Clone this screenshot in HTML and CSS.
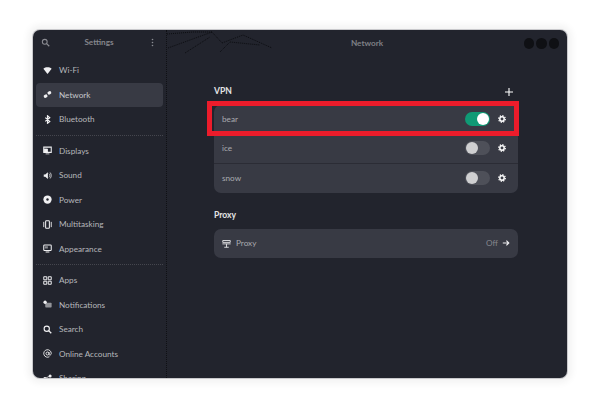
FILE: index.html
```html
<!DOCTYPE html>
<html lang="en">
<head>
<meta charset="utf-8">
<title>Settings - Network</title>
<link rel="stylesheet" href="styles.css">
</head>
<body>
<div class="window">
  <aside class="sidebar">
    <header class="side-head">
      <svg class="ic dim" viewBox="0 0 12 12"><circle cx="5" cy="5" r="3.2" fill="none" stroke="currentColor" stroke-width="1.4"/><path d="M7.5 7.5L11 11" stroke="currentColor" stroke-width="1.6"/></svg>
      <span class="side-title">Settings</span>
      <svg class="ic dim" viewBox="0 0 12 12"><circle cx="6" cy="2" r="1.1" fill="currentColor"/><circle cx="6" cy="6" r="1.1" fill="currentColor"/><circle cx="6" cy="10" r="1.1" fill="currentColor"/></svg>
    </header>
    <nav class="nav">
      <div class="group">
        <div class="item"><svg class="ic" viewBox="0 0 12 12"><path d="M0.5 3.5C3.5 1 8.500 1 11.500 3.500L6 10.500Z" fill="currentColor"/></svg><span>Wi-Fi</span></div>
        <div class="item active"><svg class="ic" viewBox="0 0 12 12"><rect x="6" y="1.800" width="5" height="4" rx="1.700" fill="currentColor" transform="rotate(-25 8.500 3.800)"/><rect x="1" y="6.200" width="5" height="4" rx="1.700" fill="currentColor" transform="rotate(-25 3.500 8.200)"/></svg><span>Network</span></div>
        <div class="item"><svg class="ic" viewBox="0 0 12 12"><path d="M3 3.500L9 8.500L6 11V1L9 3.500L3 8.500" fill="none" stroke="currentColor" stroke-width="1.600"/></svg><span>Bluetooth</span></div>
      </div>
      <div class="group">
        <div class="item"><svg class="ic" viewBox="0 0 12 12"><path d="M1 1.500H11V8.500H1Z" fill="none" stroke="currentColor" stroke-width="1.400"/><path d="M1.500 4H6V8H1.500ZM3.500 10.500H8.500" fill="currentColor" stroke="currentColor"/></svg><span>Displays</span></div>
        <div class="item"><svg class="ic" viewBox="0 0 12 12"><path d="M1 4.500H3L6.500 1.500V10.500L3 7.500H1Z" fill="currentColor"/><path d="M8 3.500C9.500 5 9.500 7 8 8.500M9.500 2C11.500 4.500 11.500 7.500 9.500 10" fill="none" stroke="currentColor"/></svg><span>Sound</span></div>
        <div class="item"><svg class="ic" viewBox="0 0 12 12"><circle cx="6" cy="6" r="5.500" fill="currentColor"/><circle cx="6" cy="6" r="1.600" fill="#22242d"/></svg><span>Power</span></div>
        <div class="item"><svg class="ic" viewBox="0 0 12 12"><rect x="3.500" y="1" width="5" height="10" rx="1" fill="none" stroke="currentColor" stroke-width="1.400"/><path d="M1 2.500V9.500M11 2.500V9.500" stroke="currentColor" stroke-width="1.200"/></svg><span>Multitasking</span></div>
        <div class="item"><svg class="ic" viewBox="0 0 12 12"><rect x="1" y="1.200" width="10" height="7.500" rx="1" fill="none" stroke="currentColor" stroke-width="1.400"/><rect x="2.500" y="3" width="4" height="3" fill="currentColor" opacity=".5"/><path d="M3.500 10.700H8.500" stroke="currentColor" stroke-width="1.400"/></svg><span>Appearance</span></div>
      </div>
      <div class="group last">
        <div class="item"><svg class="ic" viewBox="0 0 12 12"><path d="M1 1H5V5H1ZM7 1H11V5H7ZM1 7H5V11H1ZM7 7H11V11H7Z" fill="none" stroke="currentColor" stroke-width="1.300"/></svg><span>Apps</span></div>
        <div class="item"><svg class="ic" viewBox="0 0 12 12"><rect x="3" y="3.500" width="8.500" height="6.500" rx="1" fill="currentColor" opacity=".55"/><circle cx="2.800" cy="3" r="2.200" fill="currentColor"/></svg><span>Notifications</span></div>
        <div class="item"><svg class="ic" viewBox="0 0 12 12"><circle cx="5" cy="5" r="3.500" fill="none" stroke="currentColor" stroke-width="1.500"/><path d="M7.500 7.500L11 11" stroke="currentColor" stroke-width="1.800"/></svg><span>Search</span></div>
        <div class="item"><svg class="ic" viewBox="0 0 12 12"><circle cx="6" cy="6" r="2" fill="none" stroke="currentColor" stroke-width="1.200"/><path d="M8 4V7C8 8.500 11 8.500 11 6A5 5 0 1 0 8.500 10.300" fill="none" stroke="currentColor" stroke-width="1.200"/></svg><span>Online Accounts</span></div>
        <div class="item"><svg class="ic" viewBox="0 0 12 12"><circle cx="2.500" cy="6" r="2" fill="currentColor"/><circle cx="9.500" cy="2.500" r="2" fill="currentColor"/><circle cx="9.500" cy="9.500" r="2" fill="currentColor"/><path d="M2.500 6L9.500 2.500M2.500 6L9.500 9.500" stroke="currentColor"/></svg><span>Sharing</span></div>
      </div>
    </nav>
  </aside>
  <main class="content">
    <svg class="sketch" viewBox="0 0 110 30"><path d="M0 4L26 2L45 2L55 13L76 5L105 18M1 18L45 2M18 23L43 7M53 22L63 12L93 15" fill="none" stroke="#0a0b0f" stroke-width=".9" stroke-dasharray="1 1"/></svg>
    <header class="head">
      <span class="head-title">Network</span>
      <div class="controls"><i class="dot"></i><i class="dot"></i><i class="dot"></i></div>
    </header>
    <div class="page">
      <section class="sec">
        <div class="sec-head"><span class="sec-title">VPN</span><svg class="plus" viewBox="0 0 10 10"><path d="M5 1V9M1 5H9" stroke="#fff" stroke-width="1.100"/></svg></div>
        <div class="card">
          <div class="row"><span class="label">bear</span><div class="toggle on"><i class="knob"></i></div><svg class="gear" viewBox="0 0 12 12"><use href="#g"/></svg><div class="mark"></div></div>
          <div class="row"><span class="label">ice</span><div class="toggle"><i class="knob"></i></div><svg class="gear" viewBox="0 0 12 12"><use href="#g"/></svg></div>
          <div class="row"><span class="label">snow</span><div class="toggle"><i class="knob"></i></div><svg class="gear" viewBox="0 0 12 12"><use href="#g"/></svg></div>
        </div>
      </section>
      <section class="sec">
        <div class="sec-head"><span class="sec-title">Proxy</span></div>
        <div class="card">
          <div class="row link">
            <svg class="ic proxy" viewBox="0 0 12 12"><path d="M1 2H11V4.500H1ZM0.500 6.500H11.500M6 6.500V11M3 11H9" fill="none" stroke="currentColor" stroke-width="1.200"/></svg>
            <span class="label">Proxy</span><span class="off">Off</span>
            <svg class="arrow" viewBox="0 0 10 10"><path d="M1 5H8.500M5.500 2L8.500 5L5.500 8" fill="none" stroke="#f0f0f2" stroke-width="1.400"/></svg>
          </div>
        </div>
      </section>
    </div>
  </main>
</div>
<svg class="defs" width="0" height="0"><defs><g id="g"><circle cx="6" cy="6" r="3.300" fill="none" stroke="#fff" stroke-width="2.200"/><circle cx="6" cy="6" r="5" fill="none" stroke="#fff" stroke-width="1.800" stroke-dasharray="1.900 2"/></g></defs></svg>
</body>
</html>
```
FILE: styles.css
```css
* { box-sizing: border-box; }
html, body { height: 100%; }
body {
  margin: 0;
  background: #fff;
  padding: 30px 33px 37px;
  font-family: Lato, "Noto Sans", sans-serif;
  font-size: 8.2px;
  overflow: hidden;
}
.defs { position: absolute; }
.window {
  display: flex;
  height: 348px;
  background: #22242d;
  border-radius: 7px;
  overflow: hidden;
  color: #c2c3c7;
  box-shadow: 0 0 0 1px #c9c9cc, 0 0 7px 5px #f3f3f3;
}
.sidebar {
  width: 134px;
  flex: none;
  border-right: 1px dotted #0f1014;
  padding: 0 3px;
  display: flex;
  flex-direction: column;
}
.side-head {
  flex: none;
  height: 28px;
  padding: 0 6px 4px 5px;
  display: flex;
  align-items: center;
  justify-content: space-between;
}
.side-title { font-weight: 700; color: #84858b; }
.nav { flex: none; }
.ic { width: 9px; height: 9px; flex: none; color: #f0f0f2; }
.dim { color: #8b8c92; }
.group {
  padding-bottom: 3px;
  margin-bottom: 3px;
  border-bottom: 1px dotted #45464e;
}
.group.last { border-bottom: 0; }
.item {
  height: 24.500px;
  display: flex;
  align-items: center;
  gap: 7px;
  padding-left: 7px;
  border-radius: 4px;
  color: #b6b7bb;
}
.item.active { background: #383a44; color: #c6c7cb; height: 23.500px; margin: 0.5px 0; }
.content {
  position: relative;
  flex: 1;
  min-width: 0;
}
.sketch {
  position: absolute;
  left: 0;
  top: 0;
  width: 110px;
  height: 30px;
}
.head {
  height: 26px;
  display: flex;
  align-items: center;
  justify-content: center;
  position: relative;
}
.head-title { font-weight: 700; color: #7f8086; }
.controls {
  position: absolute;
  right: 8px;
  top: 8px;
  display: flex;
  gap: 2px;
}
.dot { width: 10.500px; height: 10.500px; border-radius: 50%; background: #0f1014; }
.page {
  width: 304px;
  margin: 0 0 0 47px;
  padding-top: 27px;
}
.sec { margin-bottom: 14px; }
.sec-head {
  height: 16px;
  display: flex;
  align-items: center;
  justify-content: space-between;
  padding-right: 4px;
}
.sec-title { font-weight: 700; color: #e4e4e6; font-size: 8.600px; }
.plus { width: 10px; height: 10px; margin-top: 2px; }
.card {
  background: #383a44;
  border-radius: 7px;
  margin-top: 5.500px;
}
.row {
  position: relative;
  height: 29.500px;
  display: flex;
  align-items: center;
  padding: 0 12px 0 8px;
  border-bottom: 1px solid #2b2c35;
}
.row:last-child { border-bottom: 0; }
.row.link { padding-right: 8px; }
.label { color: #a9aab0; flex: 1; }
.toggle {
  width: 25px;
  height: 14px;
  border-radius: 7px;
  background: #4e5059;
  padding: 1px;
  margin-right: 8px;
}
.toggle.on { background: #0f9a75; display: flex; justify-content: flex-end; }
.knob { display: block; width: 12px; height: 12px; border-radius: 50%; background: #cfcfd1; }
.on .knob { background: #fff; }
.gear { width: 8px; height: 8px; }
.mark {
  position: absolute;
  left: -7px;
  right: -1px;
  top: -3.500px;
  bottom: -3px;
  border: 5.500px solid #ec1c2b;
  pointer-events: none;
}
.proxy { margin-right: 5px; color: #e4e4e6; }
.off { color: #85868c; margin-right: 4px; }
.arrow { width: 8px; height: 8px; }
```
